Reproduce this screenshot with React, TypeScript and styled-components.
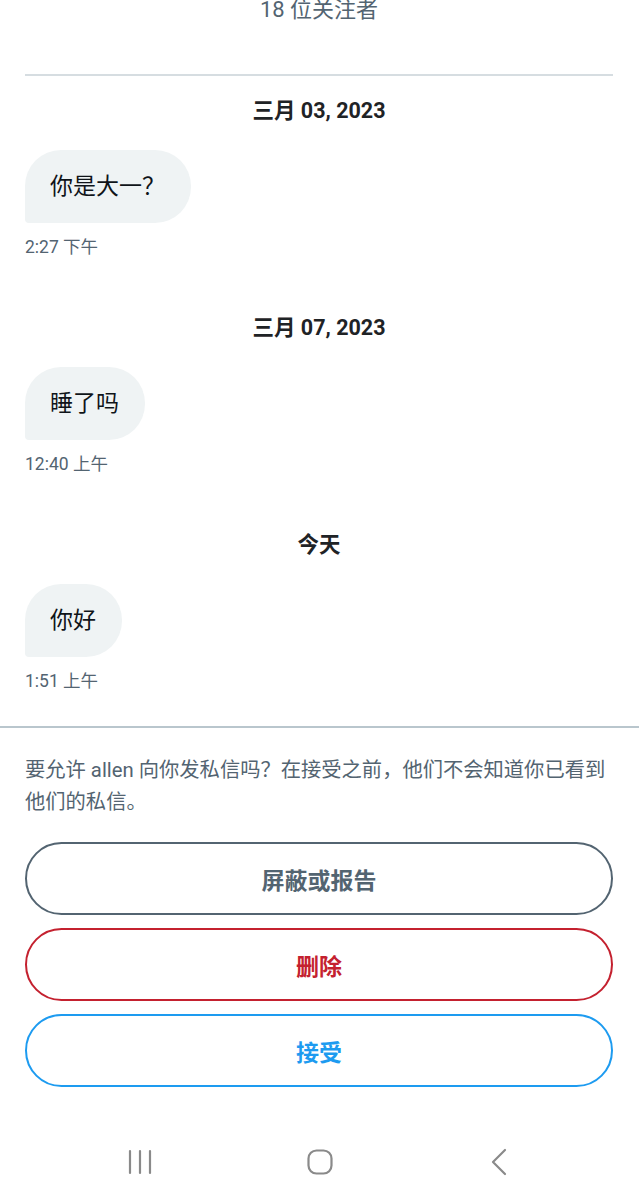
import styled, { createGlobalStyle } from "styled-components";

const GlobalStyle = createGlobalStyle`
  body {
    margin: 0;
    background: #ffffff;
    font-family: Roboto, "Noto Sans CJK SC", sans-serif;
    color: #0f1419;
  }
`;

type DayMessage = {
  date: string;
  text: string;
  time: string;
};

const days: DayMessage[] = [
  { date: "三月 03, 2023", text: "你是大一？", time: "2:27 下午" },
  { date: "三月 07, 2023", text: "睡了吗", time: "12:40 上午" },
  { date: "今天", text: "你好", time: "1:51 上午" },
];

const App = () => {
  return (
    <>
      <GlobalStyle />
      <Page>
        <Thread>
          <Followers>18 位关注者</Followers>
          <TopRule />
          {days.map((day) => (
            <DayGroup key={day.date}>
              <DateLabel>{day.date}</DateLabel>
              <Bubble>{day.text}</Bubble>
              <Stamp>{day.time}</Stamp>
            </DayGroup>
          ))}
        </Thread>

        <RequestPanel>
          <Notice>
            要允许 allen 向你发私信吗？在接受之前，他们不会知道你已看到他们的私信。
          </Notice>
          <Actions>
            <ActionButton tone="#536471">屏蔽或报告</ActionButton>
            <ActionButton tone="#c4212f">删除</ActionButton>
            <ActionButton tone="#1d9bf0">接受</ActionButton>
          </Actions>
        </RequestPanel>

        <NavBar>
          <svg width="24" height="26" viewBox="0 0 24 26">
            <g stroke="#8a8a8a" strokeWidth="2.2" strokeLinecap="round">
              <line x1="2" y1="2" x2="2" y2="24" />
              <line x1="12" y1="2" x2="12" y2="24" />
              <line x1="22" y1="2" x2="22" y2="24" />
            </g>
          </svg>
          <svg width="28" height="28" viewBox="0 0 28 28">
            <rect
              x="2.5"
              y="2.5"
              width="23"
              height="23"
              rx="8"
              fill="none"
              stroke="#8a8a8a"
              strokeWidth="2.2"
            />
          </svg>
          <svg width="20" height="28" viewBox="0 0 20 28">
            <polyline
              points="15,2 3,14 15,26"
              fill="none"
              stroke="#8a8a8a"
              strokeWidth="2.2"
              strokeLinecap="round"
              strokeLinejoin="round"
            />
          </svg>
        </NavBar>
      </Page>
    </>
  );
};

export default App;

const Page = styled.div`
  width: 639px;
  min-height: 1200px;
  display: flex;
  flex-direction: column;
  overflow: hidden;
`;

const Thread = styled.div`
  padding: 0 26px 35px 25px;
  display: flex;
  flex-direction: column;
`;

const Followers = styled.div`
  font-size: 22px;
  line-height: 20px;
  color: #536471;
  text-align: center;
`;

const TopRule = styled.div`
  margin-top: 54px;
  height: 2px;
  background: #d6dde1;
`;

const DayGroup = styled.div`
  display: flex;
  flex-direction: column;
  align-items: flex-start;
  padding-top: 23px;

  & + & {
    padding-top: 59px;
  }
`;

const DateLabel = styled.div`
  align-self: stretch;
  text-align: center;
  font-size: 21.5px;
  line-height: 24px;
  font-weight: 700;
  color: #1f2326;
`;

const Bubble = styled.div`
  margin-top: 27px;
  background: #eff3f4;
  border-radius: 36px 36px 36px 4px;
  padding: 22px 26px 22px 25px;
  font-size: 23px;
  line-height: 29px;
  color: #0f1419;
`;

const Stamp = styled.div`
  margin-top: 14px;
  font-size: 17.5px;
  line-height: 20px;
  color: #536471;
`;

const RequestPanel = styled.div`
  border-top: 2px solid #b9c6cd;
  padding: 26px 26px 0 25px;
`;

const Notice = styled.p`
  margin: 0;
  font-size: 20.3px;
  line-height: 32px;
  color: #536471;
`;

const Actions = styled.div`
  margin-top: 24px;
  display: flex;
  flex-direction: column;
  gap: 13px;
`;

const ActionButton = styled.button<{ tone: string }>`
  height: 73px;
  border: 2px solid ${(p) => p.tone};
  border-radius: 37px;
  background: #ffffff;
  color: ${(p) => p.tone};
  font-family: Roboto, "Noto Sans CJK SC", sans-serif;
  font-size: 23px;
  font-weight: 700;
  cursor: pointer;
`;

const NavBar = styled.div`
  margin-top: 37px;
  height: 75px;
  display: grid;
  grid-template-columns: 1fr 1fr 1fr;
  align-items: center;
  justify-items: center;
  padding: 0 49px 0 50px;
  box-sizing: border-box;
`;
